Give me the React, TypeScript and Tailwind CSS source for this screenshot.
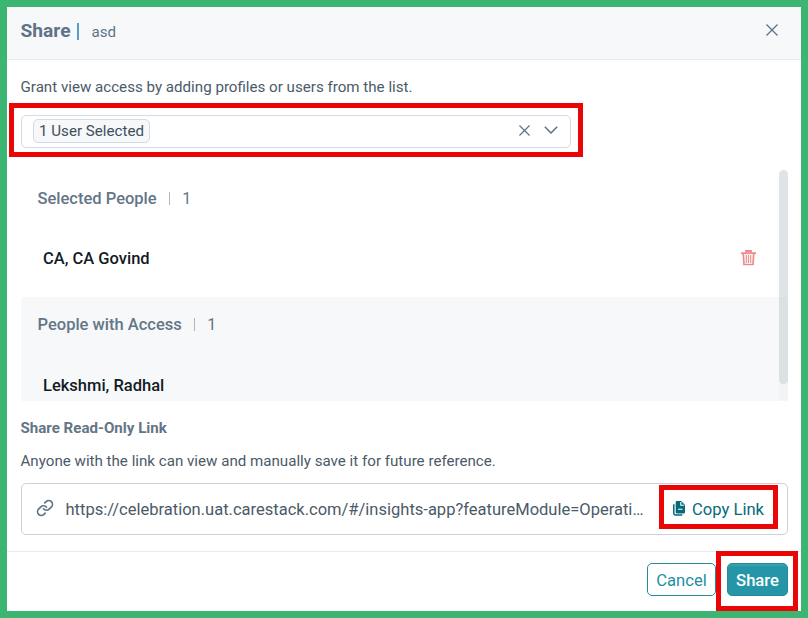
import type { ReactNode } from 'react';
import { Link } from 'lucide-react';

interface Person {
  id: number;
  name: string;
}

const selectedPeople: Person[] = [{ id: 1, name: 'CA, CA Govind' }];
const peopleWithAccess: Person[] = [{ id: 2, name: 'Lekshmi, Radhal' }];
const shareUrl = 'https://celebration.uat.carestack.com/#/insights-app?featureModule=Operati…';

function CloseIcon({ className }: { className: string }) {
  return (
    <svg className={className} viewBox="0 0 12 12" fill="none" stroke="currentColor" strokeWidth="1.3">
      <path d="M.5.5l11 11M11.5.5l-11 11" />
    </svg>
  );
}

function ChevronIcon() {
  return (
    <svg className="h-[8px] w-[14px]" viewBox="0 0 14 8" fill="none" stroke="currentColor" strokeWidth="1.5">
      <path d="M.8.8L7 7l6.2-6.2" />
    </svg>
  );
}

function TrashIcon() {
  return (
    <svg className="h-4 w-[15px]" viewBox="0 0 15 16" fill="none" stroke="currentColor">
      <path d="M0 3.2h15" strokeWidth="1.9" />
      <path d="M5 2.5V1h5v1.5" strokeWidth="1.8" />
      <path d="M2.3 3.8l.7 10.7h9l.7-10.7" strokeWidth="1.7" />
      <path d="M5.3 5v8M7.5 5v8M9.7 5v8" strokeWidth="1.15" />
    </svg>
  );
}

function CopyIcon() {
  return (
    <svg className="h-[15px] w-3" viewBox="0 0 12 15" fill="none">
      <path d="M.8 3.2v9.3a1.5 1.5 0 0 0 1.5 1.5h7" stroke="currentColor" strokeWidth="1.5" />
      <path
        d="M3.9 0h4.2L12 3.9v7.3a1.2 1.2 0 0 1-1.2 1.2H3.9a1.2 1.2 0 0 1-1.2-1.2v-10A1.2 1.2 0 0 1 3.9 0z"
        fill="currentColor"
      />
      <path d="M7.8 1v3.3h3.3M5 8.3h4.5" stroke="white" strokeWidth="1.1" />
    </svg>
  );
}

// Red outline drawn over the control it points out
function Highlight({ className }: { className: string }) {
  return <div className={`pointer-events-none absolute border-5 border-[#ea0606] ${className}`} />;
}

interface PeopleSectionProps {
  title: string;
  people: Person[];
  className: string;
  rowClassName: string;
  action?: ReactNode;
}

function PeopleSection({ title, people, className, rowClassName, action }: PeopleSectionProps) {
  return (
    <section className={`pr-8 pl-[16.5px] ${className}`}>
      <div className="flex h-6 items-center text-[16.5px] text-[#647587]">
        <h3 className="font-medium">{title}</h3>
        <span className="mb-px ml-3 h-[13px] w-px bg-[#a9bac6]" />
        <span className="mb-px ml-[12.5px] text-base">{people.length}</span>
      </div>
      {people.map((person) => (
        <div key={person.id} className={`flex h-6 items-center justify-between pl-[5.5px] ${rowClassName}`}>
          <span className="text-[16.5px] font-medium text-[#131b23]">{person.name}</span>
          {action}
        </div>
      ))}
    </section>
  );
}

export default function App() {
  return (
    <div className="flex h-[618px] w-[808px] flex-col overflow-hidden border-7 border-[#3cb572] bg-white font-['Roboto',sans-serif] text-[#4b5a68]">
      <header className="flex h-[53px] shrink-0 items-center border-b border-[#e8eaec] bg-[#f6f8fa] pr-[23.5px] pb-1 pl-[13.5px] text-[#5f7387]">
        <h1 className="text-[19.2px] font-bold">Share</h1>
        <span className="ml-1.5 h-[17px] w-[2px] bg-[#5b9bc8]" />
        <span className="mt-[3px] ml-[13px] text-[15.1px]">asd</span>
        <button type="button" aria-label="Close" className="mb-0.5 ml-auto">
          <CloseIcon className="h-3 w-3" />
        </button>
      </header>

      <main className="flex h-[491px] shrink-0 flex-col pr-[13px] pl-3.5">
        <p className="mt-[15px] -ml-[0.5px] h-6 text-[15.13px] leading-6">
          Grant view access by adding profiles or users from the list.
        </p>

        <div className="relative mt-4 flex h-[33px] w-[550px] items-center rounded-[5px] border border-[#d6dce4] pr-3 pl-[11px] text-[#5f7387]">
          <span className="mb-px flex h-6 items-center rounded-[5px] border border-[#d3dae2] bg-[#f6f8fa] px-[5px] text-[15.15px] text-[#3f4f5e]">
            1 User Selected
          </span>
          <button type="button" aria-label="Clear" className="mr-3.5 mb-0.5 ml-auto">
            <CloseIcon className="h-[11px] w-[11px]" />
          </button>
          <span className="mb-[3px]">
            <ChevronIcon />
          </span>
          <Highlight className="-top-[13px] -left-[13px] h-[54px] w-[574px]" />
        </div>

        <div className="relative mt-[22px] h-[231px] overflow-hidden">
          <PeopleSection
            title="Selected People"
            people={selectedPeople}
            className="h-[127px] pt-[17px]"
            rowClassName="mt-9"
            action={
              <button type="button" aria-label="Remove" className="mb-[3px] text-[#ee8a8a]">
                <TrashIcon />
              </button>
            }
          />
          <PeopleSection
            title="People with Access"
            people={peopleWithAccess}
            className="h-[104px] bg-[#f6f8fa] pt-4"
            rowClassName="mt-[37px]"
          />
          <div className="absolute top-0 right-0 h-full w-[9px] rounded-full bg-black/[0.02]">
            <div className="h-[214px] rounded-full bg-[#c0cacf]/45" />
          </div>
        </div>

        <h2 className="mt-[15px] -ml-[0.5px] h-6 text-[15.1px] leading-6 font-bold text-[#647587]">
          Share Read-Only Link
        </h2>
        <p className="mt-[9px] -ml-[0.5px] h-6 text-[15.13px] leading-6">
          Anyone with the link can view and manually save it for future reference.
        </p>

        <div className="relative mt-[10px] flex h-[52px] items-center rounded-[5px] border border-[#cdd1da] pr-[23px] pl-[14px]">
          <Link className="mb-0.5 h-[18px] w-[18px] shrink-0 text-[#5f7387]" strokeWidth={2.2} />
          <span className="mt-0.5 ml-[11.5px] text-[16.52px] whitespace-nowrap">{shareUrl}</span>
          <button type="button" className="ml-auto flex items-center gap-[7px] text-[16.6px] whitespace-nowrap text-[#056b7b]">
            <CopyIcon />
            <span className="mt-0.5">Copy Link</span>
          </button>
          <Highlight className="top-px left-[637px] h-[44px] w-[119px]" />
        </div>
      </main>

      <footer className="relative flex h-[60px] shrink-0 items-start justify-end border-t border-[#e8eaec] pt-[11px] pr-[13px] text-[16.6px]">
        <button type="button" className="h-[33px] w-[69px] rounded-[5px] border border-[#258b9b] pt-[3px] text-[#2390a1]">
          Cancel
        </button>
        <button
          type="button"
          className="ml-[11px] h-[33px] w-[61px] rounded-[5px] border border-[#258b9b] bg-[#2496a8] pt-[3px] font-medium text-white shadow-[inset_0_2px_0_#3b9eae]"
        >
          Share
        </button>
        <Highlight className="-top-px right-[3px] h-[60px] w-[82px]" />
      </footer>
    </div>
  );
}
